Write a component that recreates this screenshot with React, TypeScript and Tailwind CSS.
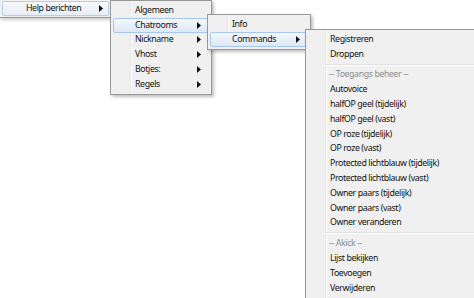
import React from "react";

type Item =
  | { kind: "item"; label: string; sub?: boolean; active?: boolean }
  | { kind: "header"; label: string }
  | { kind: "sep" };

const Arrow: React.FC = () => (
  <svg width="4" height="7" viewBox="0 0 4 7" className="shrink-0">
    <path d="M0 0 L4 3.5 L0 7 Z" fill="#111" />
  </svg>
);

const Row: React.FC<{ item: Item }> = ({ item }) => {
  if (item.kind === "sep") {
    return (
      <div className="h-[6px] flex flex-col justify-center pl-[19px]">
        <div className="h-px bg-[#e0e0e0]" />
        <div className="h-px bg-white" />
      </div>
    );
  }
  if (item.kind === "header") {
    return (
      <div className="h-[14.8px] flex items-center pl-[23px] text-[#8d8d8d]">
        {item.label}
      </div>
    );
  }
  return (
    <div
      className={`h-[14.8px] mx-[2px] flex items-center pl-[21px] pr-[7px] rounded-[2px] border ${
        item.active
          ? "border-[#a9c7ec] bg-gradient-to-b from-[#f4f8fd] to-[#dde8f6]"
          : "border-transparent"
      }`}
    >
      <span className="flex-1 whitespace-nowrap">{item.label}</span>
      {item.sub && <Arrow />}
    </div>
  );
};

const Menu: React.FC<{ items: Item[]; className: string }> = ({ items, className }) => (
  <div
    className={`absolute bg-[#f0f0f0] border border-[#979797] py-[2px] shadow-[2px_2px_3px_rgba(0,0,0,0.25)] ${className}`}
  >
    <div className="absolute left-[19px] top-0 bottom-0 w-px bg-[#e4e5e5]" />
    <div className="absolute left-[20px] top-0 bottom-0 w-px bg-white" />
    <div className="relative">
      {items.map((it, i) => (
        <Row key={i} item={it} />
      ))}
    </div>
  </div>
);

const menu2: Item[] = [
  { kind: "item", label: "Algemeen" },
  { kind: "item", label: "Chatrooms", sub: true, active: true },
  { kind: "item", label: "Nickname", sub: true },
  { kind: "item", label: "Vhost", sub: true },
  { kind: "item", label: "Botjes:", sub: true },
  { kind: "item", label: "Regels", sub: true },
];

const menu3: Item[] = [
  { kind: "item", label: "Info" },
  { kind: "item", label: "Commands", sub: true, active: true },
];

const menu4: Item[] = [
  { kind: "item", label: "Registreren" },
  { kind: "item", label: "Droppen" },
  { kind: "sep" },
  { kind: "header", label: "-- Toegangs beheer --" },
  { kind: "item", label: "Autovoice" },
  { kind: "item", label: "halfOP geel (tijdelijk)" },
  { kind: "item", label: "halfOP geel (vast)" },
  { kind: "item", label: "OP roze (tijdelijk)" },
  { kind: "item", label: "OP roze (vast)" },
  { kind: "item", label: "Protected lichtblauw (tijdelijk)" },
  { kind: "item", label: "Protected lichtblauw (vast)" },
  { kind: "item", label: "Owner paars (tijdelijk)" },
  { kind: "item", label: "Owner paars (vast)" },
  { kind: "item", label: "Owner veranderen" },
  { kind: "sep" },
  { kind: "header", label: "-- Akick --" },
  { kind: "item", label: "Lijst bekijken" },
  { kind: "item", label: "Toevoegen" },
  { kind: "item", label: "Verwijderen" },
];

const App: React.FC = () => {
  return (
    <div
      className="relative w-[474px] h-[298px] overflow-hidden bg-white text-[8.8px] tracking-[-0.4px] text-[#111]"
      style={{ fontFamily: '"Noto Sans", "Open Sans", sans-serif' }}
    >
      {/* top menu, only its last item shows */}
      <div className="absolute left-[-1px] top-[-1px] w-[113px] bg-[#f0f0f0] border border-[#979797] py-[1px] shadow-[2px_2px_3px_rgba(0,0,0,0.2)]">
        <div className="h-[14.8px] mx-[2px] flex items-center pl-[23px] pr-[5px] rounded-[2px] border border-[#b9cde4] bg-gradient-to-b from-[#f7f9fc] to-[#e6edf6]">
          <span className="flex-1">Help berichten</span>
          <Arrow />
        </div>
      </div>

      <Menu items={menu2} className="left-[110px] top-0 w-[102px]" />
      <Menu items={menu3} className="left-[207px] top-[14px] w-[104px]" />
      <Menu items={menu4} className="left-[305px] top-[29px] w-[180px] h-[290px]" />
    </div>
  );
};

export default App;
